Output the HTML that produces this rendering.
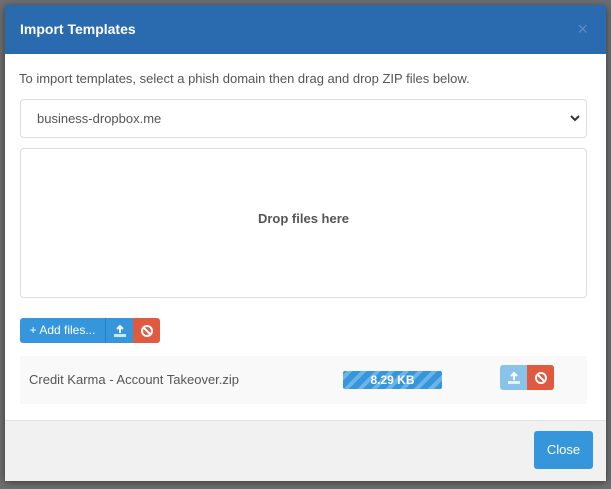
<!DOCTYPE html>
<html><head><style>
body{margin:0;width:611px;height:489px;background:#6f6f6f;font-family:"Liberation Sans",sans-serif;position:relative;overflow:hidden}
.m{position:absolute;left:5px;top:5px;width:601px;height:475px;background:#fff;box-shadow:0 2px 8px rgba(0,0,0,.5)}
.h{height:49px;background:#2a6bb0;color:#fff;font-weight:bold;font-size:14px;line-height:49px;padding-left:15px;position:relative}
.x{position:absolute;right:18px;top:0;color:#5d8cc4;font-size:18px;font-weight:normal}
.a{position:absolute}
.btn{position:absolute;color:#fff;font-size:12px;text-align:center}
.btn svg{position:absolute;left:50%;top:50%;transform:translate(-50%,-50%)}
</style></head><body>
<div class="m">
<div class="h">Import Templates<span class="x">×</span></div>
<div class="a" style="left:14px;top:66px;font-size:13px;color:#555">To import templates, select a phish domain then drag and drop ZIP files below.</div>
<div class="a" style="left:15px;top:94px;width:565px;height:37px;border:1px solid #ddd;border-radius:4px;font-size:13px;color:#555;line-height:37px;text-indent:16px">business-dropbox.me<svg style="position:absolute;right:6px;top:15px" width="10" height="7" viewBox="0 0 10 7"><path d="M1 1l4 4 4-4" stroke="#333" stroke-width="2" fill="none"/></svg></div>
<div class="a" style="left:15px;top:143px;width:565px;height:148px;border:1px solid #ddd;border-radius:4px;font-size:13px;font-weight:bold;color:#555;line-height:140px;text-align:center">Drop files here</div>
<div class="btn" style="left:15px;top:313px;width:85px;height:25px;line-height:25px;background:#3596db;border-radius:3px 0 0 3px">+ Add files...</div>
<div class="btn" style="left:100px;top:313px;width:28px;height:25px;background:#3596db;border-left:1px solid #2a7fc0"><svg width="12" height="12" viewBox="0 0 12 12"><path d="M6 1v7M3 4l3-3 3 3" stroke="#fff" stroke-width="2" fill="none"/><rect x="0" y="9" width="12" height="3" fill="#cfe4f5"/></svg></div>
<div class="btn" style="left:128px;top:313px;width:27px;height:25px;background:#e05a42;border-radius:0 3px 3px 0"><svg width="13" height="13" viewBox="0 0 13 13"><circle cx="6.5" cy="6.5" r="5" stroke="#fff" stroke-width="2" fill="none"/><path d="M3 3l7 7" stroke="#fff" stroke-width="2"/></svg></div>
<div class="a" style="left:15px;top:351px;width:567px;height:48px;background:#f9f9f9"></div>
<div class="a" style="left:24px;top:367px;font-size:13px;color:#555">Credit Karma - Account Takeover.zip</div>
<div class="btn" style="left:338px;top:366px;width:99px;height:18px;line-height:18px;font-weight:bold;background:repeating-linear-gradient(-45deg,#3596db 0 6px,#6cb4e8 6px 10px);border-radius:2px">8.29 KB</div>
<div class="btn" style="left:495px;top:360px;width:27px;height:25px;background:#89c3ea;border-radius:3px 0 0 3px"><svg width="12" height="12" viewBox="0 0 12 12"><path d="M6 1v7M3 4l3-3 3 3" stroke="#fff" stroke-width="2" fill="none"/><rect x="0" y="9" width="12" height="3" fill="#e6f2fb"/></svg></div>
<div class="btn" style="left:522px;top:360px;width:27px;height:25px;background:#e05a42;border-radius:0 3px 3px 0"><svg width="13" height="13" viewBox="0 0 13 13"><circle cx="6.5" cy="6.5" r="5" stroke="#fff" stroke-width="2" fill="none"/><path d="M3 3l7 7" stroke="#fff" stroke-width="2"/></svg></div>
<div class="a" style="left:0;top:415px;width:601px;height:60px;background:#f1f1f1;border-top:1px solid #e3e3e3"></div>
<div class="btn" style="left:529px;top:426px;width:59px;height:38px;line-height:38px;font-size:13px;background:#3596db;border-radius:3px">Close</div>
</div>
</body></html>
